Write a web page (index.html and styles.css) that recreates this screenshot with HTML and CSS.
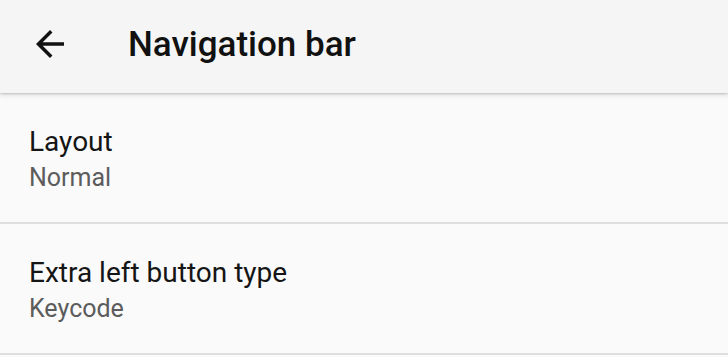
FILE: index.html
```html
<!DOCTYPE html>
<html>
<head>
<meta charset="utf-8">
<link rel="stylesheet" href="styles.css">
</head>
<body>
<header class="appbar">
  <svg class="back" viewBox="0 0 24 24" width="42" height="42"><path d="M20 11H7.83l5.59-5.59L12 4l-8 8 8 8 1.41-1.41L7.83 13H20v-2z" fill="#111"/></svg>
  <h1 class="title">Navigation bar</h1>
</header>
<main class="list">
  <div class="row">
    <div class="row-title">Layout</div>
    <div class="row-sub">Normal</div>
  </div>
  <div class="row">
    <div class="row-title">Extra left button type</div>
    <div class="row-sub">Keycode</div>
  </div>
</main>
</body>
</html>
```
FILE: styles.css
```css
html, body {
  margin: 0;
  padding: 0;
  background: #fafafa;
  font-family: Roboto, "Noto Sans", sans-serif;
  overflow: hidden;
}
.appbar {
  position: relative;
  z-index: 1;
  height: 93px;
  background: #f5f5f5;
  display: flex;
  align-items: center;
  padding-left: 29px;
  box-shadow: 0 1px 2px rgba(0,0,0,0.18), 0 3px 5px rgba(0,0,0,0.08);
}
.back {
  display: block;
  margin-top: -6px;
}
.title {
  margin: -3px 0 0 57px;
  font-size: 35px;
  font-weight: 500;
  line-height: 40px;
  color: #111;
}
.row {
  padding: 32px 29px 29px;
  border-bottom: 2px solid #dedede;
}
.row-title {
  font-size: 28px;
  line-height: 34px;
  color: #151515;
}
.row-sub {
  margin-top: 4px;
  font-size: 25px;
  line-height: 30px;
  color: #5c5c5c;
}
```
